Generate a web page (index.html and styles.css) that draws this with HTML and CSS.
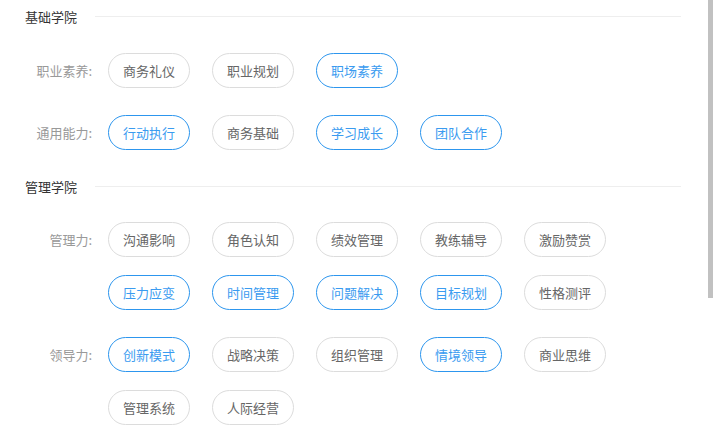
FILE: index.html
```html
<!DOCTYPE html>
<html lang="zh">
<head>
<meta charset="utf-8">
<link rel="stylesheet" href="styles.css">
</head>
<body>
<div class="page">
  <section class="academy">
    <div class="academy-head"><span class="academy-title">基础学院</span><span class="academy-line"></span></div>
    <div class="category">
      <div class="cat-label">职业素养:</div>
      <div class="tags">
        <span class="tag">商务礼仪</span>
        <span class="tag">职业规划</span>
        <span class="tag active">职场素养</span>
      </div>
    </div>
    <div class="category">
      <div class="cat-label">通用能力:</div>
      <div class="tags">
        <span class="tag active">行动执行</span>
        <span class="tag">商务基础</span>
        <span class="tag active">学习成长</span>
        <span class="tag active">团队合作</span>
      </div>
    </div>
  </section>
  <section class="academy">
    <div class="academy-head second"><span class="academy-title">管理学院</span><span class="academy-line"></span></div>
    <div class="category">
      <div class="cat-label">管理力:</div>
      <div class="tags">
        <span class="tag">沟通影响</span>
        <span class="tag">角色认知</span>
        <span class="tag">绩效管理</span>
        <span class="tag">教练辅导</span>
        <span class="tag">激励赞赏</span>
        <span class="tag active">压力应变</span>
        <span class="tag active">时间管理</span>
        <span class="tag active">问题解决</span>
        <span class="tag active">目标规划</span>
        <span class="tag">性格测评</span>
      </div>
    </div>
    <div class="category">
      <div class="cat-label">领导力:</div>
      <div class="tags">
        <span class="tag active">创新模式</span>
        <span class="tag">战略决策</span>
        <span class="tag">组织管理</span>
        <span class="tag active">情境领导</span>
        <span class="tag">商业思维</span>
        <span class="tag">管理系统</span>
        <span class="tag">人际经营</span>
      </div>
    </div>
  </section>
</div>
<div class="scroll-thumb"></div>
</body>
</html>
```
FILE: styles.css
```css
html, body {
  margin: 0;
  padding: 0;
  background: #fff;
  overflow: hidden;
}
body {
  font-family: "Noto Sans CJK SC", "Noto Sans", sans-serif;
  font-size: 13px;
  color: #333;
}
.page {
  width: 708px;
  box-sizing: border-box;
  padding: 7px 27px 0 25px;
}
.academy-head {
  display: flex;
  align-items: center;
  height: 20px;
  margin-bottom: 26px;
}
.academy-head.second {
  margin-bottom: 25px;
}
.academy-title {
  font-size: 13px;
  line-height: 20px;
  color: #333;
  white-space: nowrap;
}
.academy-line {
  flex: 1;
  height: 1px;
  background: #eeeeee;
  margin-left: 18px;
  margin-top: -1px;
}
.category {
  display: flex;
  align-items: flex-start;
  margin-bottom: 27px;
}
.cat-label {
  width: 67px;
  flex: none;
  text-align: right;
  color: #999;
  line-height: 35px;
  height: 35px;
  margin-right: 16px;
  white-space: nowrap;
}
.tags {
  display: flex;
  flex-wrap: wrap;
  gap: 18px 22px;
  width: 520px;
}
.tag {
  box-sizing: border-box;
  width: 82px;
  height: 35px;
  border: 1px solid #dcdcdc;
  border-radius: 18px;
  display: flex;
  align-items: center;
  justify-content: center;
  color: #666;
  font-size: 13px;
  line-height: 1;
}
.tag.active {
  border-color: #2d96ee;
  color: #3a9bf0;
}
.scroll-thumb {
  position: fixed;
  right: 0;
  top: 0;
  width: 5px;
  height: 298px;
  background: #c1c1c1;
}
```
